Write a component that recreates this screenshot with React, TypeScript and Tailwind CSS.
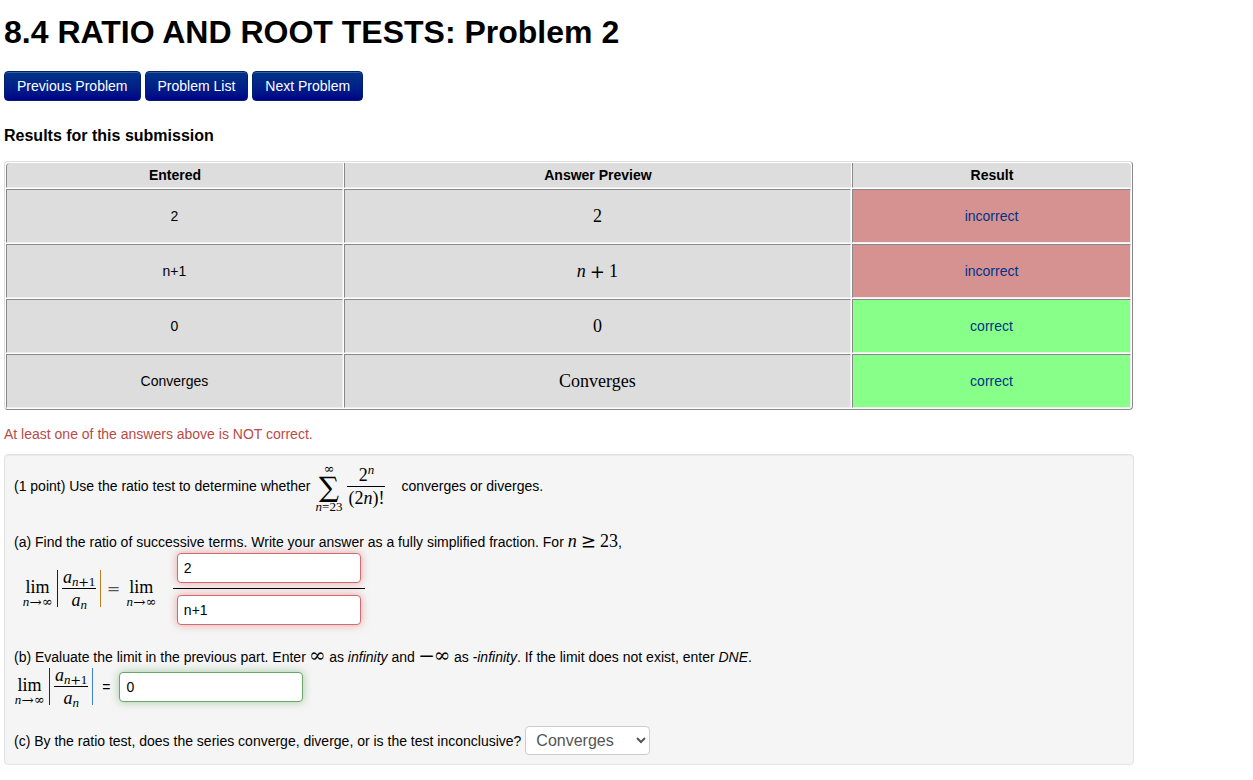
import React from 'react';

interface ResultRow {
  entered: string;
  preview: React.ReactNode;
  correct: boolean;
}

const serif = "font-['Liberation_Serif',serif]";
const cell = 'border border-t-[#888] border-l-[#888] border-r-[#eee] border-b-[#eee]';
const headCell = 'border-b border-l border-b-[#eee] border-l-[#888] bg-[#ddd]';
const field = 'block h-[30px] w-[184px] rounded-[4px] border bg-white px-1.5 text-sm text-black outline-none';
const wrongField = 'border-[#d06b70] shadow-[0_0_8px_rgba(220,80,80,0.5)]';
const rightField = 'border-[#6aa56a] shadow-[0_0_8px_rgba(80,160,80,0.5)]';

// Wide math symbols that the serif face draws too narrow
const Sym: React.FC<{ children: React.ReactNode }> = ({ children }) => (
  <span className="font-['DejaVu_Math_TeX_Gyre','DejaVu_Serif',serif] leading-none">{children}</span>
);

const InlineMath: React.FC<{ children: React.ReactNode }> = ({ children }) => (
  <span className={`${serif} text-[18px] leading-none`}>{children}</span>
);

const Infinity: React.FC<{ negative?: boolean }> = ({ negative }) => (
  <span className="text-[20px] leading-none"><Sym>{negative ? '−∞' : '∞'}</Sym></span>
);

const rows: ResultRow[] = [
  { entered: '2', preview: '2', correct: false },
  { entered: 'n+1', preview: <><i>n</i> <Sym>+</Sym> 1</>, correct: false },
  { entered: '0', preview: '0', correct: true },
  { entered: 'Converges', preview: 'Converges', correct: true },
];

const NavButton: React.FC<{ children: React.ReactNode }> = ({ children }) => (
  <button
    type="button"
    className="h-[30px] rounded-[4px] border border-[#002266] bg-linear-to-b from-[#003388] to-[#000088] px-3 text-sm text-white shadow-[inset_0_1px_0_rgba(255,255,255,0.2)]"
  >
    {children}
  </button>
);

const Fraction: React.FC<{ top: React.ReactNode; bottom: React.ReactNode }> = ({ top, bottom }) => (
  <span className={`${serif} inline-flex flex-col items-center text-[18px] leading-5`}>
    <span className="px-px">{top}</span>
    <span className="my-px h-px w-full bg-black"></span>
    <span className="px-px">{bottom}</span>
  </span>
);

const Limit: React.FC = () => (
  <span className={`${serif} inline-flex w-[31px] flex-col items-center pt-2 whitespace-nowrap`}>
    <span className="text-[18px] leading-[18px]">lim</span>
    <span className="text-[13px] leading-3"><i>n</i><Sym>→∞</Sym></span>
  </span>
);

const Ratio: React.FC<{ left: string; right: string }> = ({ left, right }) => (
  <span className="inline-flex items-center gap-1">
    <span className={`h-[37px] w-px ${left}`}></span>
    <Fraction
      top={<><i>a</i><sub className="text-[13px]"><i>n</i><Sym>+</Sym>1</sub></>}
      bottom={<><i>a</i><sub className="text-[13px]"><i>n</i></sub></>}
    />
    <span className={`h-[37px] w-px ${right}`}></span>
  </span>
);

const Results: React.FC = () => (
  <div className="mt-[15px] pr-px">
    <table className="w-full table-fixed border-separate border-spacing-px rounded-[4px] border border-t-[#ddd] border-l-[#ddd] border-r-[#888] border-b-[#888] text-center text-sm">
      <colgroup>
        <col className="w-[30%]" />
        <col />
        <col className="w-[279px]" />
      </colgroup>
      <thead>
        <tr className="h-[25px]">
          <th className={`${headCell} rounded-tl-[4px]`}>Entered</th>
          <th className={headCell}>Answer Preview</th>
          <th className={`${headCell} rounded-tr-[4px]`}>Result</th>
        </tr>
      </thead>
      <tbody>
        {rows.map(row => (
          <tr key={row.entered} className="h-[54px]">
            <td className={`${cell} bg-[#ddd]`}>{row.entered}</td>
            <td className={`${cell} bg-[#ddd] pt-0.5`}><InlineMath>{row.preview}</InlineMath></td>
            <td className={`${cell} ${row.correct ? 'bg-[#88ff88]' : 'bg-[#d69191]'}`}>
              <a href="#problem" className="text-[#003388]">{row.correct ? 'correct' : 'incorrect'}</a>
            </td>
          </tr>
        ))}
      </tbody>
    </table>
  </div>
);

const Problem: React.FC = () => (
  <form id="problem" className="mt-2.5 rounded-[4px] border border-[#e3e3e3] bg-[#f5f5f5] p-[9px] shadow-[inset_0_1px_1px_rgba(0,0,0,0.05)]">
    <div className="flex h-11 items-center">
      <span>(1 point) Use the ratio test to determine whether</span>
      <span className={`${serif} ml-1 inline-flex w-[29px] flex-col items-center pt-1 text-[13px] leading-3`}>
        <span><Sym>∞</Sym></span>
        <span className="text-[24px] leading-6"><Sym>∑</Sym></span>
        <span><i>n</i>=23</span>
      </span>
      <span className="ml-1">
        <Fraction top={<>2<sup className="text-[13px]"><i>n</i></sup></>} bottom={<>(2<i>n</i>)!</>} />
      </span>
      <span className="ml-4">converges or diverges.</span>
    </div>

    <p className="mt-6 h-5">
      (a) Find the ratio of successive terms. Write your answer as a fully simplified fraction. For{' '}
      <InlineMath><i>n</i> <Sym>≥</Sym> 23</InlineMath>,
    </p>
    <div className="mt-px flex items-center pl-2">
      <Limit />
      <span className="ml-1"><Ratio left="bg-[#301040]" right="bg-[#c08020]" /></span>
      <span className="mx-1.5 text-[16px] text-[#555]"><Sym>=</Sym></span>
      <Limit />
      <div className="ml-4 flex flex-col items-center">
        <input aria-label="Numerator" defaultValue="2" autoFocus className={`${field} ${wrongField}`} />
        <span className="mt-[5px] mb-1.5 h-px w-[192px] bg-black"></span>
        <input aria-label="Denominator" defaultValue="n+1" className={`${field} ${wrongField}`} />
      </div>
    </div>

    <p className="mt-5 h-5">
      (b) Evaluate the limit in the previous part. Enter <Infinity /> as <i>infinity</i> and{' '}
      <Infinity negative /> as <i>-infinity</i>. If the limit does not exist, enter <i>DNE</i>.
    </p>
    <div className="mt-0.5 flex h-10 items-center">
      <Limit />
      <span className="ml-1"><Ratio left="bg-[#700070]" right="bg-[#4080d0]" /></span>
      <label htmlFor="limit" className="mx-[9px]">=</label>
      <input id="limit" defaultValue="0" className={`${field} ${rightField}`} />
    </div>

    <div className="mt-[19px] flex items-center">
      <label htmlFor="verdict">(c) By the ratio test, does the series converge, diverge, or is the test inconclusive?</label>
      <select id="verdict" defaultValue="Converges" className="ml-1 h-[29px] w-[125px] rounded-[4px] border border-[#ccc] bg-white px-1.5 text-base leading-5 text-[#555]">
        <option>Converges</option>
        <option>Diverges</option>
        <option>Inconclusive</option>
      </select>
    </div>
  </form>
);

export default function App() {
  return (
    <main className="max-w-[1138px] px-1 font-['Liberation_Sans',Arial,sans-serif] text-sm text-black">
      <h1 className="pt-3 text-[32px] leading-10 font-bold">8.4 RATIO AND ROOT TESTS: Problem 2</h1>
      <nav className="mt-[19px] flex gap-1">
        <NavButton>Previous Problem</NavButton>
        <NavButton>Problem List</NavButton>
        <NavButton>Next Problem</NavButton>
      </nav>
      <h3 className="mt-[25px] text-base leading-5 font-bold">Results for this submission</h3>
      <Results />
      <p className="mt-3.5 leading-5 text-[#b94a48]">At least one of the answers above is NOT correct.</p>
      <Problem />
    </main>
  );
}
